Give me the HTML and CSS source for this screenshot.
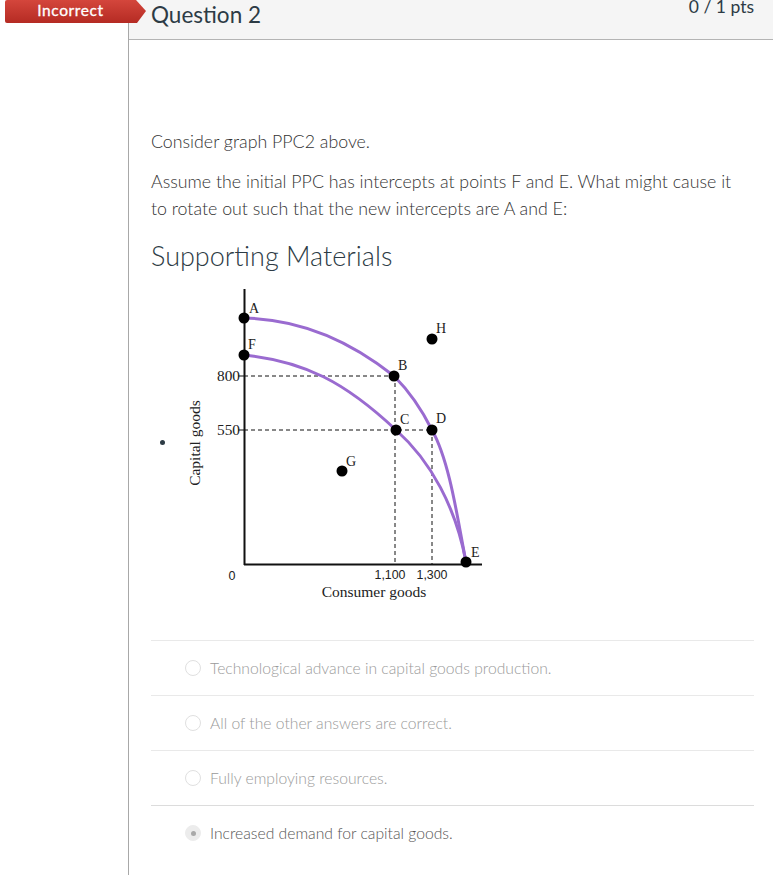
FILE: index.html
```html
<!DOCTYPE html>
<html>
<head>
<meta charset="utf-8">
<link rel="stylesheet" href="styles.css">
</head>
<body>
<div class="page">
  <div class="badge">Incorrect</div>
  <div class="gutter"></div>
  <div class="question">
    <div class="q-header">
      <h2 class="q-title">Question 2</h2>
      <span class="q-pts">0 / 1 pts</span>
    </div>
    <div class="q-body">
      <p class="q-text">Consider graph PPC2 above.</p>
      <p class="q-text">Assume the initial PPC has intercepts at points F and E. What might cause it to rotate out such that the new intercepts are A and E:</p>
      <h3 class="q-sub">Supporting Materials</h3>
      <ul class="q-list">
        <li class="q-item">
          <svg class="graph" width="310" height="320" viewBox="180 285 310 320" xmlns="http://www.w3.org/2000/svg">
            <g stroke="#111" stroke-width="1" stroke-dasharray="4 3" fill="none">
              <line x1="244" y1="376" x2="394" y2="376"/>
              <line x1="244" y1="430" x2="432" y2="430"/>
              <line x1="395" y1="376" x2="395" y2="564"/>
              <line x1="432" y1="430" x2="432" y2="564"/>
            </g>
            <g stroke="#111" stroke-width="2" fill="none">
              <line x1="244.5" y1="289" x2="244.5" y2="565"/>
              <line x1="244" y1="564.5" x2="482" y2="564.5"/>
              <line x1="238" y1="376" x2="244" y2="376" stroke-width="1"/>
              <line x1="238" y1="430" x2="244" y2="430" stroke-width="1"/>
            </g>
            <g stroke="#9a6bd0" stroke-width="3" fill="none" stroke-linecap="round">
              <path d="M244 318 C304 319 354 344 394 376 C408 390 422 410 432 430 C450 462 458 522 466 562"/>
              <path d="M244 355 C304 361 345 382 396 430 C431 461 456 508 466 562"/>
            </g>
            <g fill="#000">
              <circle cx="244" cy="318" r="5.5"/>
              <circle cx="244" cy="355" r="5.5"/>
              <circle cx="394" cy="376" r="5.5"/>
              <circle cx="396" cy="430" r="5.5"/>
              <circle cx="432" cy="430" r="5.5"/>
              <circle cx="432" cy="339" r="5.5"/>
              <circle cx="342" cy="471" r="5.5"/>
              <circle cx="466" cy="562" r="5.5"/>
            </g>
            <g class="lbl-serif" font-size="14">
              <text x="249" y="313">A</text>
              <text x="248" y="349">F</text>
              <text x="398" y="370">B</text>
              <text x="436" y="333">H</text>
              <text x="400" y="424">C</text>
              <text x="436" y="423">D</text>
              <text x="346" y="466">G</text>
              <text x="471" y="557">E</text>
              <text x="240" y="381" text-anchor="end" font-size="14" textLength="23" lengthAdjust="spacingAndGlyphs">800</text>
              <text x="240" y="435" text-anchor="end" font-size="14" textLength="23" lengthAdjust="spacingAndGlyphs">550</text>
              <text x="374" y="597" text-anchor="middle" font-size="15.5">Consumer goods</text>
              <text x="0" y="0" text-anchor="middle" font-size="15.5" transform="translate(200 443) rotate(-90)">Capital goods</text>
            </g>
            <g class="lbl-sans" font-size="12.5">
              <text x="232" y="580" text-anchor="middle">0</text>
              <text x="390" y="579" text-anchor="middle" textLength="31" lengthAdjust="spacingAndGlyphs">1,100</text>
              <text x="432" y="579" text-anchor="middle" textLength="31" lengthAdjust="spacingAndGlyphs">1,300</text>
            </g>
          </svg>
        </li>
      </ul>
      <div class="answers">
        <div class="answer">
          <span class="radio"></span>
          <span class="answer-text">Technological advance in capital goods production.</span>
        </div>
        <div class="answer">
          <span class="radio"></span>
          <span class="answer-text">All of the other answers are correct.</span>
        </div>
        <div class="answer">
          <span class="radio"></span>
          <span class="answer-text">Fully employing resources.</span>
        </div>
        <div class="answer answer-selected">
          <span class="radio radio-selected"></span>
          <span class="answer-text">Increased demand for capital goods.</span>
        </div>
      </div>
    </div>
  </div>
</div>
</body>
</html>
```

FILE: styles.css
```css
html, body {
  margin: 0;
  padding: 0;
  background: #fff;
}
body {
  font-family: Lato, "Open Sans", sans-serif;
  color: #2d3b45;
  width: 773px;
  height: 875px;
  overflow: hidden;
}
.page {
  position: relative;
  display: flex;
  min-height: 875px;
}
.badge {
  position: absolute;
  left: 5px;
  top: 0;
  width: 141px;
  height: 23px;
  box-sizing: border-box;
  padding-right: 10px;
  background: linear-gradient(#d4463c, #b52b23);
  clip-path: polygon(0 0, 131px 0, 141px 11px, 132px 23px, 0 23px);
  color: #fff;
  font-size: 15.5px;
  font-weight: 400;
  line-height: 21px;
  text-align: center;
  letter-spacing: 0.6px;
  -webkit-text-stroke: 0.3px #fff;
  z-index: 2;
  border-radius: 2px 0 0 2px;
}
.gutter {
  width: 128px;
  flex: none;
}
.question {
  flex: 1;
  border-left: 1px solid #a8a8a8;
  display: flex;
  flex-direction: column;
}
.q-header {
  height: 39px;
  background: #f5f5f5;
  border-bottom: 1px solid #b4b4b4;
  display: flex;
  justify-content: space-between;
  align-items: flex-start;
  padding: 0 19px 0 22px;
}
.q-title {
  margin: 0;
  padding-top: 2px;
  font-size: 22.5px;
  font-weight: 400;
  line-height: 26px;
  color: #2d3b45;
}
.q-pts {
  font-size: 17.5px;
  line-height: 14px;
  color: #2d3b45;
  margin-top: -0.5px;
}
.q-body {
  padding: 88px 19px 0 22px;
}
.q-text {
  margin: 0 0 13px 0;
  max-width: 594px;
  font-size: 17.8px;
  font-weight: 300;
  line-height: 27px;
  color: #333;
}
.q-sub {
  margin: 18px 0 0 0;
  font-size: 27px;
  font-weight: 300;
  line-height: 32px;
  color: #2d3b45;
}
.q-list {
  margin: 13px 0 0 0;
  padding: 0 0 0 29px;
  list-style: none;
}
.q-item {
  position: relative;
  height: 320px;
}
.q-item::before {
  content: "";
  position: absolute;
  left: -20px;
  top: 155px;
  width: 5px;
  height: 5px;
  border-radius: 50%;
  background: #2d3b45;
}
.graph {
  display: block;
}
.lbl-serif {
  font-family: "Liberation Serif", serif;
  fill: #222;
}
.lbl-sans {
  font-family: "Liberation Sans", sans-serif;
  fill: #222;
}
.answers {
  margin-top: 35px;
}
.answer {
  display: flex;
  align-items: center;
  height: 54px;
  border-top: 1px solid #e9e9e9;
  padding-left: 34px;
}
.answer-selected {
  border-top-color: #dcdcdc;
}
.radio {
  width: 14px;
  height: 14px;
  border: 1px solid #e0e0e0;
  border-radius: 50%;
  background: #fff;
  flex: none;
  margin-right: 9px;
  position: relative;
}
.radio-selected {
  background: #ececec;
  border-color: #ececec;
}
.radio-selected::after {
  content: "";
  position: absolute;
  left: 4.5px;
  top: 4.5px;
  width: 5px;
  height: 5px;
  border-radius: 50%;
  background: #a9a9a9;
}
.answer-text {
  font-size: 15.7px;
  font-weight: 300;
  color: #9a9a9a;
}
.answer-selected .answer-text {
  color: #555;
}
```
